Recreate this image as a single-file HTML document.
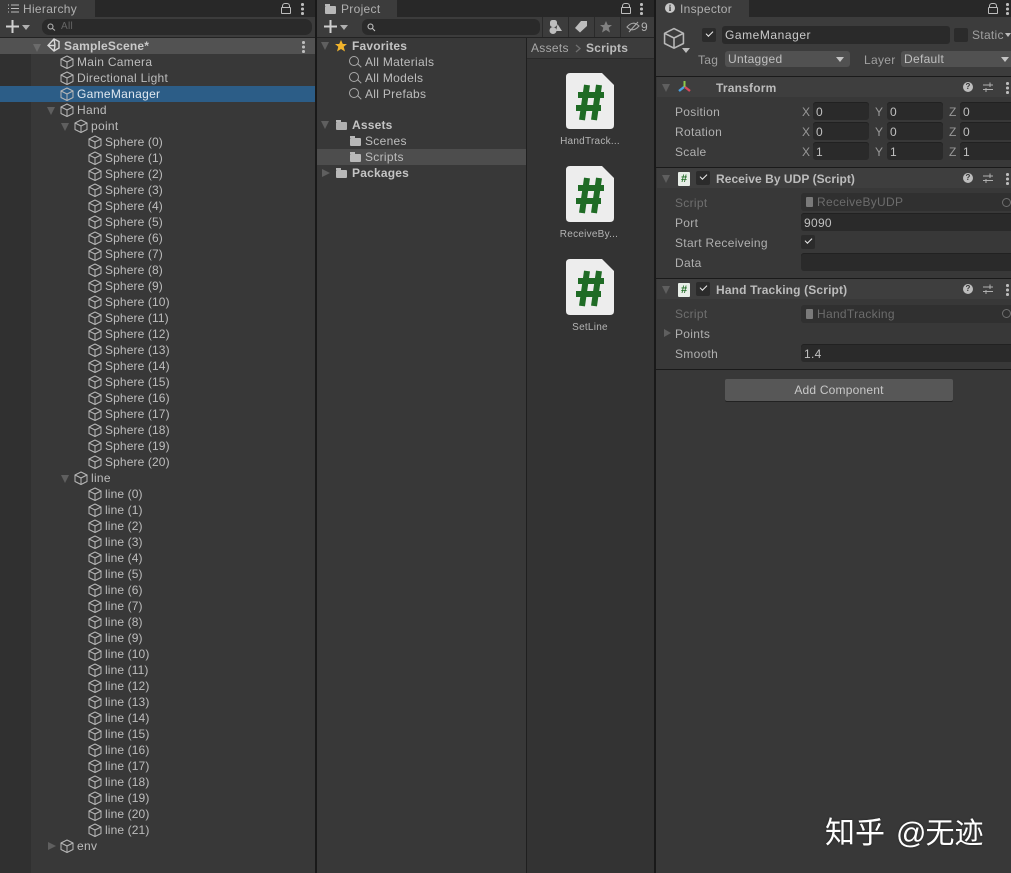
<!DOCTYPE html>
<html><head><meta charset="utf-8">
<style>
html,body{margin:0;padding:0;background:#383838}
body{width:1011px;height:873px;position:relative;overflow:hidden;font-family:"Liberation Sans","Noto Sans CJK SC",sans-serif;font-size:12px;letter-spacing:.3px;color:#bdbdbd}
.a{position:absolute;white-space:nowrap}
.t{line-height:16px}
.b{font-weight:bold;letter-spacing:.2px}
.dim{color:#6f6f6f}
.r{position:relative;height:16px;line-height:16px;white-space:nowrap}
.r svg{position:absolute;top:1px;width:14px;height:14px}
.l1{padding-left:77px}.l1 svg{left:60px}
.l2{padding-left:91px}.l2 svg{left:74px}
.l3{padding-left:105px;letter-spacing:.12px}.l3 svg{left:88px}
.f{position:absolute;background:#2a2a2a;border-radius:3px;height:18px;line-height:20px;padding-left:3px;box-sizing:border-box;color:#c0c0c0;box-shadow:inset 0 1px 0 #212121}
.o{position:absolute;background:#303030;border-radius:3px;height:18px;line-height:19px;box-sizing:border-box;color:#6c6c6c;padding-left:16px}
.o i{position:absolute;left:5px;top:4px;width:7px;height:10px;background:#7a7a7a;border-radius:1px}
.ch{position:absolute;width:14px;height:14px;background:#2b2b2b;border-radius:2px}
.ch:after{content:"";position:absolute;left:3.5px;top:3px;width:6px;height:3px;border-left:1.5px solid #eee;border-bottom:1.5px solid #eee;transform:rotate(-45deg)}
.sep{position:absolute;left:656px;width:355px;height:1px;background:#1a1a1a}
.hd{position:absolute;left:657px;width:354px;height:20px;background:#3e3e3e}
.tri{position:absolute;width:0;height:0;border-left:4.5px solid transparent;border-right:4.5px solid transparent;border-top:8px solid #5f5f5f}
.trr{position:absolute;width:0;height:0;border-top:4.5px solid transparent;border-bottom:4.5px solid transparent;border-left:8px solid #5f5f5f}
.dd{position:absolute;height:16px;line-height:17px;background:#515151;border-radius:3px;color:#c0c0c0;padding-left:3px;box-sizing:border-box}
.dd:after{content:"";position:absolute;right:6px;top:6px;border-left:4px solid transparent;border-right:4px solid transparent;border-top:5px solid #c4c4c4}
.dots{position:absolute;width:2.5px;height:2.5px;background:#bdbdbd;border-radius:50%;box-shadow:0 4.5px 0 #bdbdbd,0 9px 0 #bdbdbd}
.lock{position:absolute;width:8px;height:5px;border:1px solid #bdbdbd;border-radius:1px}
.lock:before{content:"";position:absolute;left:0;top:-5px;width:6px;height:4px;border:1px solid #bdbdbd;border-bottom:0;border-radius:3px 3px 0 0;box-sizing:content-box;margin-left:0}
.lbl{position:absolute;left:675px;line-height:16px;color:#b0b0b0}
.q{position:absolute;width:10px;height:10px;border-radius:50%;background:#bdbdbd;color:#333;font:bold 8px/10px "Liberation Sans",sans-serif;text-align:center;letter-spacing:0}
.mini{position:absolute;width:12px;height:14px;background:#e8eee8;border-radius:1px;color:#1f6b25;font:bold 11px/14px "Liberation Sans",sans-serif;text-align:center;letter-spacing:0}
.sl{position:absolute;width:12px;height:10px}
.mag{position:absolute;width:8px;height:8px;border:1px solid #aaa;border-radius:50%}
.mag:after{content:"";position:absolute;left:7px;top:8px;width:5px;height:1px;background:#aaa;transform:rotate(45deg)}
.fo{position:absolute;width:11px;height:8px;background:#b8b8b8;border-radius:1px}
.fo:before{content:"";position:absolute;left:0;top:-2px;width:5px;height:2px;background:#b8b8b8}
.fic{position:absolute;left:566px;width:48px;height:56px}
.cap{position:absolute;left:540px;width:100px;text-align:center;font-size:10px;line-height:14px;color:#b4b4b4;letter-spacing:.25px}
</style></head>
<body>
<svg width="0" height="0" style="position:absolute"><defs>
<symbol id="c" viewBox="0 0 14 14"><path d="M7 1L13 4V10.500L7 13.500L1 10.500V4ZM1 4L7 7L13 4M7 7V13.500" fill="none" stroke="#b8b8b8" stroke-width="1" stroke-linejoin="round"/></symbol>
<symbol id="h" viewBox="0 0 48 56"><path d="M4 0H36L48 12V52Q48 56 44 56H4Q0 56 0 52V4Q0 0 4 0Z" fill="#ededed"/><path d="M21 12L16 47M33 12L28 47M12 22H38M10 35H35" fill="none" stroke="#1f6b25" stroke-width="6"/></symbol>
</defs></svg>

<!-- Hierarchy -->
<div class="a" style="left:0;top:0;width:1011px;height:17px;background:#282828"></div>
<div class="a" style="left:0;top:0;width:95px;height:17px;background:#3c3c3c"></div>
<div class="a" style="left:0;top:17px;width:315px;height:20px;background:#3c3c3c"></div>
<div class="a" style="left:0;top:37px;width:315px;height:1px;background:#232323"></div>
<div class="a" style="left:0;top:38px;width:31px;height:835px;background:#303030"></div>
<div class="a" style="left:0;top:38px;width:315px;height:16px;background:#525252"></div>
<div class="a" style="left:0;top:86px;width:315px;height:16px;background:#2c5d87"></div>
<div class="a" style="left:315px;top:0;width:2px;height:873px;background:#191919"></div>
<svg class="a" style="left:8px;top:4px" width="12" height="10"><path d="M0 1H1M3 1H11M0 4.500H1M3 4.500H11M0 8H1M3 8H11" stroke="#bdbdbd" stroke-width="1"/></svg>
<div class="a t" style="left:23px;top:1px;color:#b0b0b0">Hierarchy</div>
<div class="lock" style="left:281px;top:7px"></div>
<div class="dots" style="left:301px;top:3px"></div>
<svg class="a" style="left:6px;top:20px" width="13" height="13"><path d="M6.500 0V13M0 6.500H13" stroke="#d0d0d0" stroke-width="2"/></svg>
<div class="a" style="left:22px;top:25px;border-left:4px solid transparent;border-right:4px solid transparent;border-top:5px solid #b0b0b0"></div>
<div class="a" style="left:42px;top:19px;width:270px;height:16px;background:#2a2a2a;border-radius:7px"></div>
<svg class="a" style="left:47px;top:23px" width="11" height="8"><circle cx="3.500" cy="3.500" r="2.500" fill="none" stroke="#bbb"/><path d="M5.500 5.500L8 7.500" stroke="#bbb"/></svg>
<div class="a t" style="left:61px;top:19px;font-size:10px;color:#666">All</div>
<div class="tri" style="left:33px;top:44px;border-top-color:#6b6b6b"></div>
<svg class="a" style="left:46px;top:38px" width="14" height="15" viewBox="0 0 14 15"><path d="M8 1L13 3.500V10L8 13L2 7.500ZM2 7.500H9M9 7.500L8 1M9 7.500L8 13" fill="none" stroke="#d8d8d8" stroke-width="1.400"/></svg>
<div class="a t b" style="left:64px;top:38px;color:#cacaca">SampleScene*</div>
<div class="dots" style="left:302px;top:41px"></div>
<div class="tri" style="left:47px;top:107px"></div>
<div class="tri" style="left:61px;top:123px"></div>
<div class="tri" style="left:61px;top:475px"></div>
<div class="trr" style="left:48px;top:842px"></div>

<div class="a" style="left:0;top:54px;width:315px">
<div class="r l1"><svg><use href="#c"/></svg>Main Camera</div>
<div class="r l1"><svg><use href="#c"/></svg>Directional Light</div>
<div class="r l1" style="color:#e0e8f0"><svg><use href="#c"/></svg>GameManager</div>
<div class="r l1"><svg><use href="#c"/></svg>Hand</div>
<div class="r l2"><svg><use href="#c"/></svg>point</div>
<div class="r l3"><svg><use href="#c"/></svg>Sphere (0)</div>
<div class="r l3"><svg><use href="#c"/></svg>Sphere (1)</div>
<div class="r l3"><svg><use href="#c"/></svg>Sphere (2)</div>
<div class="r l3"><svg><use href="#c"/></svg>Sphere (3)</div>
<div class="r l3"><svg><use href="#c"/></svg>Sphere (4)</div>
<div class="r l3"><svg><use href="#c"/></svg>Sphere (5)</div>
<div class="r l3"><svg><use href="#c"/></svg>Sphere (6)</div>
<div class="r l3"><svg><use href="#c"/></svg>Sphere (7)</div>
<div class="r l3"><svg><use href="#c"/></svg>Sphere (8)</div>
<div class="r l3"><svg><use href="#c"/></svg>Sphere (9)</div>
<div class="r l3"><svg><use href="#c"/></svg>Sphere (10)</div>
<div class="r l3"><svg><use href="#c"/></svg>Sphere (11)</div>
<div class="r l3"><svg><use href="#c"/></svg>Sphere (12)</div>
<div class="r l3"><svg><use href="#c"/></svg>Sphere (13)</div>
<div class="r l3"><svg><use href="#c"/></svg>Sphere (14)</div>
<div class="r l3"><svg><use href="#c"/></svg>Sphere (15)</div>
<div class="r l3"><svg><use href="#c"/></svg>Sphere (16)</div>
<div class="r l3"><svg><use href="#c"/></svg>Sphere (17)</div>
<div class="r l3"><svg><use href="#c"/></svg>Sphere (18)</div>
<div class="r l3"><svg><use href="#c"/></svg>Sphere (19)</div>
<div class="r l3"><svg><use href="#c"/></svg>Sphere (20)</div>
<div class="r l2"><svg><use href="#c"/></svg>line</div>
<div class="r l3"><svg><use href="#c"/></svg>line (0)</div>
<div class="r l3"><svg><use href="#c"/></svg>line (1)</div>
<div class="r l3"><svg><use href="#c"/></svg>line (2)</div>
<div class="r l3"><svg><use href="#c"/></svg>line (3)</div>
<div class="r l3"><svg><use href="#c"/></svg>line (4)</div>
<div class="r l3"><svg><use href="#c"/></svg>line (5)</div>
<div class="r l3"><svg><use href="#c"/></svg>line (6)</div>
<div class="r l3"><svg><use href="#c"/></svg>line (7)</div>
<div class="r l3"><svg><use href="#c"/></svg>line (8)</div>
<div class="r l3"><svg><use href="#c"/></svg>line (9)</div>
<div class="r l3"><svg><use href="#c"/></svg>line (10)</div>
<div class="r l3"><svg><use href="#c"/></svg>line (11)</div>
<div class="r l3"><svg><use href="#c"/></svg>line (12)</div>
<div class="r l3"><svg><use href="#c"/></svg>line (13)</div>
<div class="r l3"><svg><use href="#c"/></svg>line (14)</div>
<div class="r l3"><svg><use href="#c"/></svg>line (15)</div>
<div class="r l3"><svg><use href="#c"/></svg>line (16)</div>
<div class="r l3"><svg><use href="#c"/></svg>line (17)</div>
<div class="r l3"><svg><use href="#c"/></svg>line (18)</div>
<div class="r l3"><svg><use href="#c"/></svg>line (19)</div>
<div class="r l3"><svg><use href="#c"/></svg>line (20)</div>
<div class="r l3"><svg><use href="#c"/></svg>line (21)</div>
<div class="r l1"><svg><use href="#c"/></svg>env</div>
</div>

<!-- Project -->
<div class="a" style="left:317px;top:0;width:80px;height:17px;background:#3c3c3c"></div>
<div class="a" style="left:317px;top:17px;width:337px;height:20px;background:#3c3c3c"></div>
<div class="a" style="left:317px;top:37px;width:337px;height:1px;background:#232323"></div>
<div class="fo" style="left:325px;top:6px"></div>
<div class="a t" style="left:341px;top:1px;color:#b0b0b0">Project</div>
<div class="lock" style="left:621px;top:7px"></div>
<div class="dots" style="left:640px;top:3px"></div>
<svg class="a" style="left:324px;top:20px" width="13" height="13"><path d="M6.500 0V13M0 6.500H13" stroke="#d0d0d0" stroke-width="2"/></svg>
<div class="a" style="left:340px;top:25px;border-left:4px solid transparent;border-right:4px solid transparent;border-top:5px solid #b0b0b0"></div>
<div class="a" style="left:362px;top:19px;width:178px;height:16px;background:#2a2a2a;border-radius:6px"></div>
<svg class="a" style="left:367px;top:23px" width="9" height="9"><circle cx="3.500" cy="3.500" r="2.500" fill="none" stroke="#ccc"/><path d="M5.500 5.500L8 8" stroke="#ccc"/></svg>
<div class="a" style="left:542px;top:17px;width:1px;height:20px;background:#2a2a2a"></div>
<div class="a" style="left:568px;top:17px;width:1px;height:20px;background:#2a2a2a"></div>
<div class="a" style="left:594px;top:17px;width:1px;height:20px;background:#2a2a2a"></div>
<div class="a" style="left:620px;top:17px;width:1px;height:20px;background:#2a2a2a"></div>
<svg class="a" style="left:548px;top:19px" width="16" height="16"><rect x="2" y="1" width="7" height="7" rx="2.500" fill="#bdbdbd"/><circle cx="5" cy="11.500" r="3.500" fill="#bdbdbd"/><path d="M9.500 5L14 12H8Z" fill="#bdbdbd"/></svg>
<svg class="a" style="left:574px;top:20px" width="14" height="13"><path d="M7 1H13V6L6 12.500L1 8Z" fill="#bdbdbd"/></svg>
<svg class="a" style="left:600px;top:21px" width="12" height="12"><path d="M6 0L7.800 4H12L8.700 6.800L10 11.500L6 9L2 11.500L3.300 6.800L0 4H4.200Z" fill="#808080"/></svg>
<svg class="a" style="left:626px;top:21px" width="14" height="12"><path d="M1 6Q7 -1 13 5Q7 12 1 6ZM3 11L12 1" fill="none" stroke="#a8a8a8" stroke-width="1.100"/></svg>
<div class="a t" style="left:641px;top:19px;color:#b0b0b0">9</div>

<div class="tri" style="left:321px;top:42px"></div>
<svg class="a" style="left:335px;top:40px" width="12" height="12"><path d="M6 0L7.800 4H12L8.700 6.800L10 11.500L6 9L2 11.500L3.300 6.800L0 4H4.200Z" fill="#f2b42c"/></svg>
<div class="a t b" style="left:352px;top:38px;color:#c4c4c4">Favorites</div>
<div class="mag" style="left:349px;top:56px"></div>
<div class="a t" style="left:365px;top:54px">All Materials</div>
<div class="mag" style="left:349px;top:72px"></div>
<div class="a t" style="left:365px;top:70px">All Models</div>
<div class="mag" style="left:349px;top:88px"></div>
<div class="a t" style="left:365px;top:86px">All Prefabs</div>
<div class="tri" style="left:321px;top:121px"></div>
<div class="fo" style="left:336px;top:122px;background:#b0b0b0"></div>
<div class="a t b" style="left:352px;top:117px;color:#c4c4c4">Assets</div>
<div class="a" style="left:317px;top:149px;width:209px;height:16px;background:#4d4d4d"></div>
<div class="fo" style="left:350px;top:138px"></div>
<div class="a t" style="left:365px;top:133px">Scenes</div>
<div class="fo" style="left:350px;top:154px"></div>
<div class="a t" style="left:365px;top:149px">Scripts</div>
<div class="trr" style="left:322px;top:169px"></div>
<div class="fo" style="left:336px;top:170px"></div>
<div class="a t b" style="left:352px;top:165px;color:#c4c4c4">Packages</div>

<div class="a" style="left:526px;top:38px;width:1px;height:835px;background:#1f1f1f"></div>
<div class="a" style="left:527px;top:38px;width:127px;height:835px;background:#333"></div>
<div class="a" style="left:527px;top:38px;width:127px;height:20px;background:#3c3c3c"></div>
<div class="a" style="left:527px;top:58px;width:127px;height:1px;background:#2a2a2a"></div>
<div class="a t" style="left:531px;top:40px;color:#a8a8a8">Assets</div>
<svg class="a" style="left:575px;top:44px" width="7" height="9"><path d="M1 1L5 4.500L1 8" fill="none" stroke="#707070" stroke-width="1.300"/></svg>
<div class="a t b" style="left:586px;top:40px;color:#bcbcbc">Scripts</div>
<svg class="fic" style="top:73px"><use href="#h"/></svg>
<div class="cap" style="top:135px">HandTrack...</div>
<svg class="fic" style="top:166px"><use href="#h"/></svg>
<div class="cap" style="top:228px;left:539px">ReceiveBy...</div>
<svg class="fic" style="top:259px"><use href="#h"/></svg>
<div class="cap" style="top:321px">SetLine</div>
<div class="a" style="left:654px;top:0;width:2px;height:873px;background:#191919"></div>

<!-- Inspector -->
<div class="a" style="left:656px;top:0;width:93px;height:17px;background:#3c3c3c"></div>
<div class="a" style="left:656px;top:17px;width:355px;height:59px;background:#3c3c3c"></div>
<div class="a" style="left:665px;top:3px;width:10px;height:10px;border-radius:50%;background:#c8c8c8;color:#333;font:bold 9px/10px 'Liberation Serif',serif;text-align:center;letter-spacing:0">i</div>
<div class="a t" style="left:680px;top:1px;color:#b0b0b0">Inspector</div>
<div class="lock" style="left:988px;top:7px"></div>
<div class="dots" style="left:1006px;top:3px"></div>
<svg class="a" style="left:663px;top:27px" width="22" height="22" viewBox="0 0 14 14"><use href="#c"/></svg>
<div class="a" style="left:682px;top:48px;border-left:4px solid transparent;border-right:4px solid transparent;border-top:5px solid #bdbdbd"></div>
<div class="ch" style="left:702px;top:28px"></div>
<div class="a" style="left:722px;top:26px;width:228px;height:18px;line-height:19px;padding-left:3px;box-sizing:border-box;background:#2a2a2a;border-radius:3px;color:#cacaca;letter-spacing:.55px">GameManager</div>
<div class="a" style="left:954px;top:28px;width:14px;height:14px;background:#2b2b2b;border-radius:2px"></div>
<div class="a t" style="left:972px;top:27px;color:#a0a0a0">Static</div>
<div class="a" style="left:1005px;top:33px;border-left:3px solid transparent;border-right:3px solid transparent;border-top:4px solid #bdbdbd"></div>
<div class="a t" style="left:698px;top:52px;color:#a0a0a0">Tag</div>
<div class="dd" style="left:725px;top:51px;width:125px">Untagged</div>
<div class="a t" style="left:864px;top:52px;color:#a0a0a0">Layer</div>
<div class="dd" style="left:901px;top:51px;width:114px">Default</div>

<div class="sep" style="top:76px"></div>
<div class="hd" style="top:77px"></div>
<div class="tri" style="left:662px;top:84px"></div>
<svg class="a" style="left:677px;top:80px" width="15" height="14"><path d="M7.500 7V1" stroke="#8fc84a" stroke-width="2"/><path d="M7 7L2 11" stroke="#4aa0e0" stroke-width="2.400"/><path d="M8 7L13 11" stroke="#d8485a" stroke-width="2.400"/></svg>
<div class="a t b" style="left:716px;top:80px;color:#bcbcbc">Transform</div>
<div class="q" style="left:963px;top:82px">?</div>
<svg class="sl" style="left:982px;top:82px"><path d="M1 3H11M1 7.500H11M4 6V10M8 0.500V5" stroke="#b0b0b0" stroke-width="1"/></svg>
<div class="dots" style="left:1006px;top:82px"></div>

<div class="lbl" style="top:104px">Position</div>
<div class="lbl" style="top:124px">Rotation</div>
<div class="lbl" style="top:144px">Scale</div>
<div class="a t" style="left:802px;top:104px;color:#989898">X</div><div class="f" style="left:813px;top:102px;width:56px">0</div>
<div class="a t" style="left:875px;top:104px;color:#989898">Y</div><div class="f" style="left:887px;top:102px;width:56px">0</div>
<div class="a t" style="left:949px;top:104px;color:#989898">Z</div><div class="f" style="left:960px;top:102px;width:56px">0</div>
<div class="a t" style="left:802px;top:124px;color:#989898">X</div><div class="f" style="left:813px;top:122px;width:56px">0</div>
<div class="a t" style="left:875px;top:124px;color:#989898">Y</div><div class="f" style="left:887px;top:122px;width:56px">0</div>
<div class="a t" style="left:949px;top:124px;color:#989898">Z</div><div class="f" style="left:960px;top:122px;width:56px">0</div>
<div class="a t" style="left:802px;top:144px;color:#989898">X</div><div class="f" style="left:813px;top:142px;width:56px">1</div>
<div class="a t" style="left:875px;top:144px;color:#989898">Y</div><div class="f" style="left:887px;top:142px;width:56px">1</div>
<div class="a t" style="left:949px;top:144px;color:#989898">Z</div><div class="f" style="left:960px;top:142px;width:56px">1</div>

<div class="sep" style="top:167px"></div>
<div class="hd" style="top:168px"></div>
<div class="tri" style="left:662px;top:175px"></div>
<div class="mini" style="left:678px;top:172px">#</div>
<div class="ch" style="left:696px;top:171px"></div>
<div class="a t b" style="left:716px;top:171px;color:#bcbcbc;letter-spacing:.05px">Receive By UDP (Script)</div>
<div class="q" style="left:963px;top:173px">?</div>
<svg class="sl" style="left:982px;top:173px"><path d="M1 3H11M1 7.500H11M4 6V10M8 0.500V5" stroke="#b0b0b0" stroke-width="1"/></svg>
<div class="dots" style="left:1006px;top:173px"></div>
<div class="lbl dim" style="top:195px;color:#6f6f6f">Script</div>
<div class="o" style="left:801px;top:193px;width:215px"><i></i>ReceiveByUDP</div>
<div class="a" style="left:1002px;top:198px;width:7px;height:7px;border:1px solid #6f6f6f;border-radius:50%"></div>
<div class="lbl" style="top:215px">Port</div>
<div class="f" style="left:801px;top:213px;width:215px">9090</div>
<div class="lbl" style="top:235px">Start Receiveing</div>
<div class="ch" style="left:801px;top:235px"></div>
<div class="lbl" style="top:255px">Data</div>
<div class="f" style="left:801px;top:253px;width:215px"></div>

<div class="sep" style="top:278px"></div>
<div class="hd" style="top:279px"></div>
<div class="tri" style="left:662px;top:286px"></div>
<div class="mini" style="left:678px;top:283px">#</div>
<div class="ch" style="left:696px;top:282px"></div>
<div class="a t b" style="left:716px;top:282px;color:#bcbcbc;letter-spacing:.15px">Hand Tracking (Script)</div>
<div class="q" style="left:963px;top:284px">?</div>
<svg class="sl" style="left:982px;top:284px"><path d="M1 3H11M1 7.500H11M4 6V10M8 0.500V5" stroke="#b0b0b0" stroke-width="1"/></svg>
<div class="dots" style="left:1006px;top:284px"></div>
<div class="lbl dim" style="top:306px;color:#6f6f6f">Script</div>
<div class="o" style="left:801px;top:305px;width:215px"><i></i>HandTracking</div>
<div class="a" style="left:1002px;top:309px;width:7px;height:7px;border:1px solid #6f6f6f;border-radius:50%"></div>
<div class="trr" style="left:664px;top:329px;border-top-width:4px;border-bottom-width:4px;border-left-width:7px"></div>
<div class="lbl" style="top:326px">Points</div>
<div class="lbl" style="top:346px">Smooth</div>
<div class="f" style="left:801px;top:344px;width:215px">1.4</div>
<div class="sep" style="top:369px"></div>
<div class="a" style="left:725px;top:379px;width:228px;height:22px;line-height:22px;background:#575757;border-radius:2px;text-align:center;color:#c8c8c8;letter-spacing:.2px;box-shadow:0 1px 0 #222">Add Component</div>

<div class="a" style="left:825px;top:809px;font-size:30px;line-height:42px;letter-spacing:0;color:#fff;font-family:'Noto Sans CJK SC',sans-serif;text-shadow:0 0 2px rgba(0,0,0,.4)">知乎<span style="font-family:'Liberation Sans',sans-serif;margin-left:11px;font-size:30px;letter-spacing:-1px">@</span><span style="font-size:29px">无迹</span></div>
</body></html>
